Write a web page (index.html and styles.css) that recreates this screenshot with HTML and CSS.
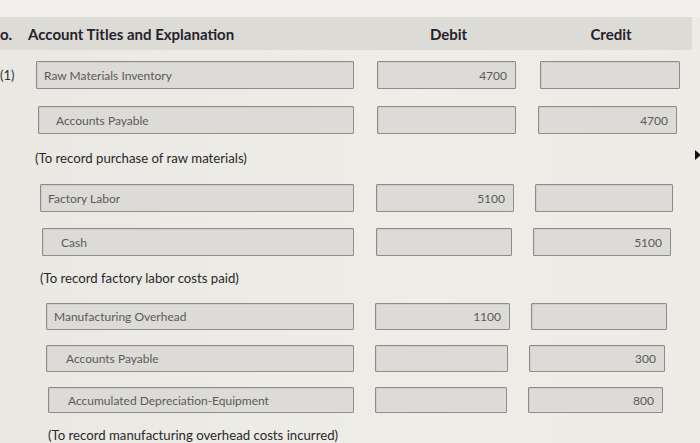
FILE: index.html
```html
<!DOCTYPE html>
<html>
<head>
<meta charset="utf-8">
<link rel="stylesheet" href="styles.css">
</head>
<body>
<div class="page">
  <div class="topstrip"></div>
  <div class="header">
    <div class="h-acct"><span class="h-no">o.</span>Account Titles and Explanation</div>
    <div class="h-debit">Debit</div>
    <div class="h-credit">Credit</div>
  </div>

  <div class="row r1">
    <div class="acct-cell"><span class="num">(1)</span><div class="field acct">Raw Materials Inventory</div></div>
    <div class="field amt debit">4700</div>
    <div class="field amt credit"></div>
  </div>
  <div class="row r2">
    <div class="acct-cell"><div class="field acct indent">Accounts Payable</div></div>
    <div class="field amt debit"></div>
    <div class="field amt credit">4700</div>
  </div>
  <div class="note n1">(To record purchase of raw materials)</div>

  <div class="row r3">
    <div class="acct-cell"><div class="field acct">Factory Labor</div></div>
    <div class="field amt debit">5100</div>
    <div class="field amt credit"></div>
  </div>
  <div class="row r4">
    <div class="acct-cell"><div class="field acct indent">Cash</div></div>
    <div class="field amt debit"></div>
    <div class="field amt credit">5100</div>
  </div>
  <div class="note n2">(To record factory labor costs paid)</div>

  <div class="row r5">
    <div class="acct-cell"><div class="field acct">Manufacturing Overhead</div></div>
    <div class="field amt debit">1100</div>
    <div class="field amt credit"></div>
  </div>
  <div class="row r6">
    <div class="acct-cell"><div class="field acct indent">Accounts Payable</div></div>
    <div class="field amt debit"></div>
    <div class="field amt credit">300</div>
  </div>
  <div class="row r7">
    <div class="acct-cell"><div class="field acct indent">Accumulated Depreciation-Equipment</div></div>
    <div class="field amt debit"></div>
    <div class="field amt credit">800</div>
  </div>
  <div class="note n3">(To record manufacturing overhead costs incurred)</div>

  <span class="cursor"></span>
</div>
</body>
</html>
```

FILE: styles.css
```css
html, body {
  margin: 0;
  padding: 0;
}
body {
  width: 700px;
  height: 443px;
  overflow: hidden;
  background: #ecebe6;
  font-family: Lato, "Open Sans", sans-serif;
}
.page {
  position: relative;
  width: 700px;
  height: 443px;
  background: linear-gradient(90deg, #e9e8e3 0%, #eeede8 60%, #ecebe6 100%);
}
.topstrip {
  height: 17px;
  background: #f1f0ec;
}
.header {
  height: 33px;
  width: 692px;
  background: #dcdbd6;
  display: flex;
  align-items: center;
  font-weight: 700;
  font-size: 15px;
  color: #26222c;
}
.h-acct {
  width: 377px;
  white-space: nowrap;
}
.h-no {
  display: inline-block;
  width: 28px;
}
.h-debit {
  width: 139px;
  text-align: center;
  padding-left: 2px;
}
.h-credit {
  width: 152px;
  text-align: center;
  padding-left: 17px;
}

.row {
  display: flex;
  align-items: center;
  --pad: 36px;
  --h: 28px;
  --g1: 23px;
  --dw: 139px;
  --g2: 24px;
  --cw: 140px;
  height: var(--h);
}
.acct-cell {
  width: 354px;
  box-sizing: border-box;
  padding-left: var(--pad);
  display: flex;
  align-items: center;
  height: 100%;
  position: relative;
}
.num {
  position: absolute;
  left: 0;
  font-size: 13px;
  color: #333;
}
.field {
  box-sizing: border-box;
  height: 100%;
  background: #dcdbd7;
  border: 1px solid #8d8c89;
  border-radius: 1px;
  display: flex;
  align-items: center;
  font-size: 12px;
  color: #5b5a58;
  box-shadow: inset 1px 1px 0 #cfceca;
}
.acct {
  flex: 1;
  padding-left: 7px;
  white-space: nowrap;
}
.acct.indent {
  padding-left: 18px;
}
.amt {
  justify-content: flex-end;
  padding-right: 8px;
}
.debit {
  margin-left: var(--g1);
  width: var(--dw);
}
.credit {
  margin-left: var(--g2);
  width: var(--cw);
}

.r1 { margin-top: 11px; --pad: 36px; }
.r2 { margin-top: 17px; --pad: 38px; --g2: 22px; --cw: 139px; }
.r3 { margin-top: 17px; --pad: 40px; --g1: 22px; --dw: 138px; --g2: 21px; --cw: 138px; }
.r4 { margin-top: 16px; --pad: 42px; --g1: 22px; --dw: 136px; --g2: 21px; --cw: 138px; }
.r5 { margin-top: 16px; --h: 27px; --pad: 46px; --g1: 21px; --dw: 135px; --g2: 21px; --cw: 136px; }
.r6 { margin-top: 15px; --h: 27px; --pad: 46px; --g1: 21px; --dw: 133px; --g2: 21px; --cw: 136px; }
.r7 { margin-top: 15px; --h: 26px; --pad: 48px; --g1: 21px; --dw: 132px; --g2: 21px; --cw: 135px; }

.r2 .acct.indent { padding-left: 17px; }
.r4 .acct.indent { padding-left: 18px; }
.r6 .acct.indent { padding-left: 19px; }
.r7 .acct.indent { padding-left: 19px; }

.note {
  height: 18px;
  line-height: 18px;
  font-size: 13.2px;
  color: #2a282b;
  white-space: nowrap;
}
.n1 { margin-top: 15px; padding-left: 35px; }
.n2 { margin-top: 13px; padding-left: 40px; }
.n3 { margin-top: 13px; padding-left: 48px; }

.cursor {
  position: absolute;
  left: 695px;
  top: 150px;
  width: 0;
  height: 0;
  border-top: 5px solid transparent;
  border-bottom: 5px solid transparent;
  border-left: 6px solid #111;
}
```
